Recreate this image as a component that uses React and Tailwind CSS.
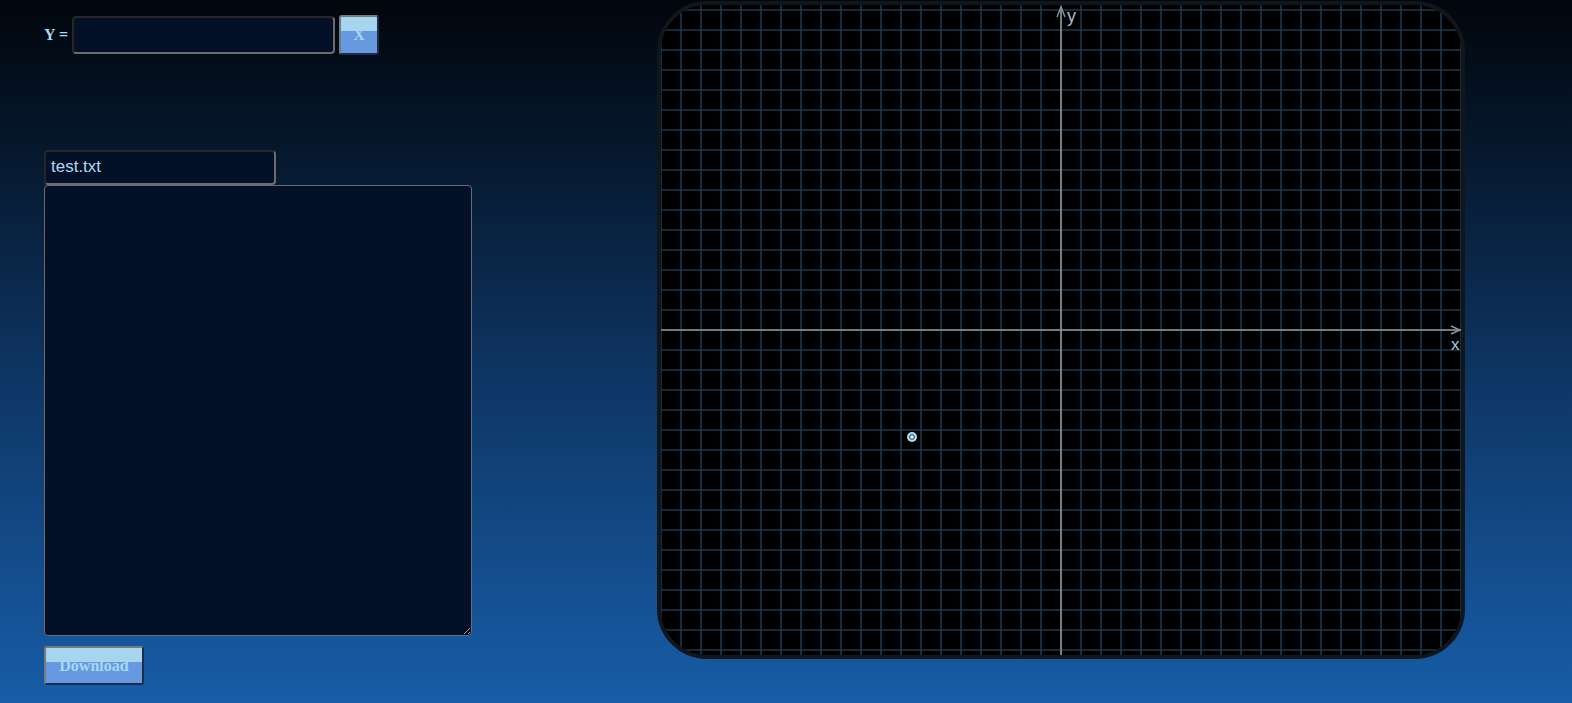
import React from "react";

const W = 800;
const H = 650;
const CX = 400;
const CY = 325;

const xs = [];
for (let x = CX % 20; x <= W; x += 20) xs.push(x);
const ys = [];
for (let y = CY % 20; y <= H; y += 20) ys.push(y);

const Graph = () => (
  <div className="ml-[6px] mt-px h-[658px] w-[808px] shrink-0 overflow-hidden rounded-[50px] border-4 border-[#12161b] bg-black">
    <svg width={W} height={H} viewBox={`0 0 ${W} ${H}`} className="block">
      {/* grid */}
      {xs.map((x) => (
        <line key={"v" + x} x1={x} y1={0} x2={x} y2={H} stroke="#1c394d" strokeWidth="1.6" />
      ))}
      {ys.map((y) => (
        <line key={"h" + y} x1={0} y1={y} x2={W} y2={y} stroke="#1c394d" strokeWidth="1.6" />
      ))}
      {/* axes */}
      <line x1={CX} y1={2} x2={CX} y2={H} stroke="#8797a3" strokeWidth="1.6" />
      <line x1={0} y1={CY} x2={W} y2={CY} stroke="#8797a3" strokeWidth="1.6" />
      <polyline points="396,12 400,2 404,12" fill="none" stroke="#8797a3" strokeWidth="1.4" />
      <polyline points="790,321 799,325 790,329" fill="none" stroke="#8797a3" strokeWidth="1.4" />
      <text x="406" y="17" fill="#a9bccb" fontSize="18" fontFamily="'Liberation Sans', Arial, sans-serif">y</text>
      <text x="790" y="345" fill="#a9c8dc" fontSize="17" fontFamily="'Liberation Sans', Arial, sans-serif">x</text>
      {/* point */}
      <circle cx="251" cy="432" r="5" fill="#a8dcf5" />
      <circle cx="251" cy="432" r="2.3" fill="#f2faff" stroke="#12304a" strokeWidth="1" />
    </svg>
  </div>
);

const blueBtn =
  "rounded-[3px] border-2 border-t-[#7a7a7a] border-l-[#7a7a7a] border-b-[#1b2d47] border-r-[#1b2d47] bg-[linear-gradient(to_bottom,#a6d6ee_0%,#a6d6ee_40%,#6699e0_40%,#6699e0_100%)] font-['Liberation_Serif',serif] font-bold text-[#a8d8f0]";

const field =
  "rounded-[4px] border-2 border-t-[#262626] border-l-[#262626] border-b-[#6c6c6c] border-r-[#6c6c6c] bg-[#040f28] outline-none";

export default function App() {
  return (
    <div className="flex h-[703px] w-full bg-[linear-gradient(to_bottom,#01060c_0%,#071b33_25%,#0e3766_55%,#175da8_100%)]">
      <div className="w-[651px] shrink-0 pl-[44px]">
        <div className="mt-[15px] flex items-center">
          <span className="w-[28px] shrink-0 font-['Liberation_Serif',serif] text-[16px] font-bold text-[#a8d8f0]">Y =</span>
          <input className={"h-[38px] w-[263px] " + field} />
          <button className={"ml-[4px] h-[40px] w-[40px] text-[16px] " + blueBtn}>X</button>
        </div>
        <input
          defaultValue="test.txt"
          className={"mt-[95px] block h-[35px] w-[232px] px-[5px] pb-[2px] font-['Liberation_Sans',Arial,sans-serif] text-[17px] text-[#a8d8f0] " + field}
        />
        <textarea className="block h-[451px] w-[428px] rounded-[4px] border border-[#6c6c6c] bg-[#040f28] outline-none" />
        <button className={"mt-[10px] block h-[39px] w-[100px] text-[16px] " + blueBtn}>Download</button>
      </div>
      <Graph />
    </div>
  );
}
